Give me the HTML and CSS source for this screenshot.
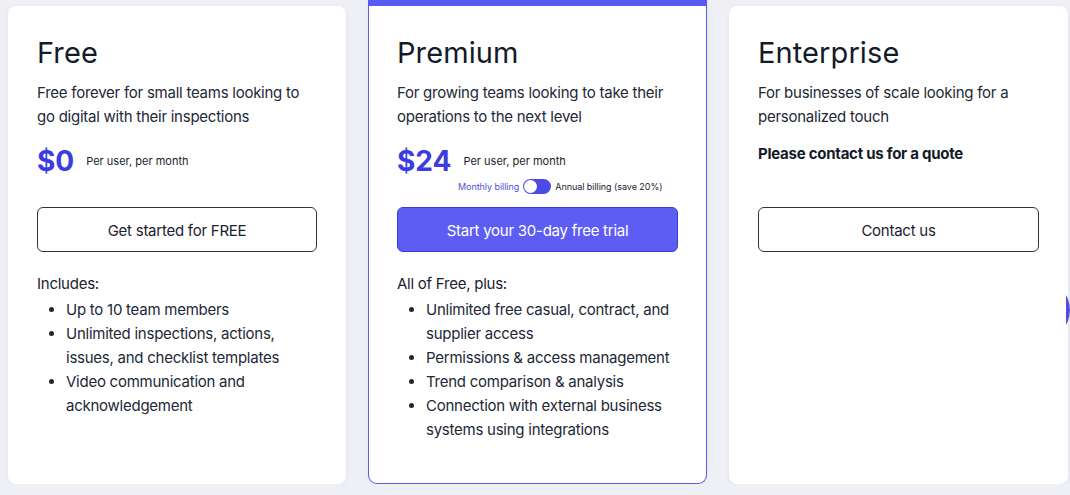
FILE: index.html
```html
<!DOCTYPE html>
<html lang="en">
<head>
<meta charset="utf-8">
<title>Pricing</title>
<link rel="stylesheet" href="styles.css">
</head>
<body>
<div class="plans">
  <section class="card">
    <h2 class="title">Free</h2>
    <p class="desc">Free forever for small teams looking to go digital with their inspections</p>
    <div class="pricing">
      <div class="price-row"><span class="price">$0</span><span class="per">Per user, per month</span></div>
    </div>
    <a class="btn">Get started for FREE</a>
    <p class="inc">Includes:</p>
    <ul class="features">
      <li>Up to 10 team members</li>
      <li>Unlimited inspections, actions, issues, and checklist templates</li>
      <li>Video communication and acknowledgement</li>
    </ul>
  </section>
  <section class="card featured">
    <h2 class="title">Premium</h2>
    <p class="desc">For growing teams looking to take their operations to the next level</p>
    <div class="pricing">
      <div class="price-row"><span class="price">$24</span><span class="per">Per user, per month</span></div>
      <div class="billing">
        <span class="bill-monthly">Monthly billing</span>
        <span class="toggle"><span class="knob"></span></span>
        <span class="bill-annual">Annual billing (save 20%)</span>
      </div>
    </div>
    <a class="btn btn-primary">Start your 30-day free trial</a>
    <p class="inc">All of Free, plus:</p>
    <ul class="features">
      <li>Unlimited free casual, contract, and supplier access</li>
      <li>Permissions &amp; access management</li>
      <li>Trend comparison &amp; analysis</li>
      <li>Connection with external business systems using integrations</li>
    </ul>
  </section>
  <section class="card">
    <h2 class="title">Enterprise</h2>
    <p class="desc">For businesses of scale looking for a personalized touch</p>
    <div class="pricing">
      <p class="quote">Please contact us for a quote</p>
    </div>
    <a class="btn">Contact us</a>
  </section>
</div>
<div class="chat-bubble"></div>
</body>
</html>
```

FILE: styles.css
```css
* { box-sizing: border-box; }
html, body {
  margin: 0;
  padding: 0;
  background: #eef0f6;
  font-family: Inter, "Noto Sans", sans-serif;
  color: #1c2230;
  overflow: hidden;
}
.plans {
  display: grid;
  grid-template-columns: 338px 339px 339px;
  column-gap: 22px;
  padding-left: 8px;
  height: 484px;
}
.card {
  background: #ffffff;
  margin-top: 6px;
  border-radius: 8px;
  padding: 29px 29px 0 29px;
  box-shadow: 0 1px 4px rgba(30, 40, 80, 0.06);
}
.card.featured {
  margin-top: 0;
  border: 1px solid #5b5bea;
  border-top: 6px solid #5a5af0;
  border-radius: 0 0 9px 9px;
  padding: 29px 28px 0 28px;
}
.title {
  margin: 0 0 11px 0;
  font-size: 29px;
  line-height: 35px;
  font-weight: 400;
  color: #131a2a;
  letter-spacing: 0.1px;
}
.desc {
  margin: 0 0 15px 0;
  font-size: 15px;
  line-height: 24px;
  letter-spacing: -0.25px;
  color: #222836;
}
.pricing {
  height: 63px;
}
.price-row {
  display: flex;
  align-items: center;
  gap: 12px;
}
.price {
  font-size: 28px;
  line-height: 34px;
  font-weight: 700;
  color: #3c3ce2;
}
.per {
  font-size: 11px;
  color: #1c2230;
}
.billing {
  display: flex;
  align-items: center;
  gap: 4px;
  margin-left: 61px;
  margin-top: 1px;
  font-size: 9px;
  line-height: 15px;
  letter-spacing: -0.05px;
}
.bill-monthly { color: #4f4fdc; }
.bill-annual { color: #1c2230; }
.toggle {
  display: inline-flex;
  align-items: center;
  width: 28px;
  height: 15px;
  border-radius: 8px;
  background: #4b4be6;
  padding: 1px;
}
.knob {
  width: 13px;
  height: 13px;
  border-radius: 50%;
  background: #ffffff;
}
.quote {
  margin: 0;
  font-size: 15px;
  line-height: 20px;
  font-weight: 700;
  letter-spacing: -0.25px;
  color: #141a28;
}
.btn {
  display: flex;
  align-items: center;
  justify-content: center;
  height: 45px;
  padding-top: 1px;
  border: 1px solid #2e3542;
  border-radius: 6px;
  font-size: 15px;
  letter-spacing: -0.25px;
  color: #1c2230;
  background: #ffffff;
}
.btn-primary {
  background: #5e5df3;
  border-color: #3a3ad8;
  color: #ffffff;
}
.inc {
  margin: 20px 0 2px 0;
  font-size: 15px;
  line-height: 24px;
  letter-spacing: -0.25px;
  color: #1c2230;
}
.features {
  margin: 0;
  padding-left: 29px;
  font-size: 15px;
  line-height: 24px;
  letter-spacing: -0.25px;
  color: #222836;
}
.chat-bubble {
  position: absolute;
  left: 1010px;
  top: 280px;
  width: 60px;
  height: 60px;
  border-radius: 50%;
  background: #4f4fe6;
  clip-path: inset(0 0 0 56px);
}
```
